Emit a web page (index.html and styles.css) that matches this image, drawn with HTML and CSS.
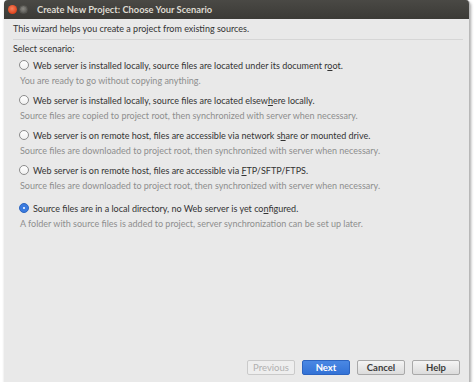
FILE: index.html
```html
<!DOCTYPE html>
<html>
<head>
<meta charset="utf-8">
<link rel="stylesheet" href="styles.css">
</head>
<body>
<div class="window">
  <div class="titlebar">
    <span class="wbtn close"></span>
    <span class="wbtn min"></span>
    <span class="title">Create New Project: Choose Your Scenario</span>
  </div>
  <div class="content">
    <div class="intro">This wizard helps you create a project from existing sources.</div>
    <div class="select">Select scenario:</div>
    <div class="options">
      <div class="opt">
        <div class="label"><span class="radio"></span><span class="text">Web server is installed locally, source files are located under its document r<u>o</u>ot.</span></div>
        <div class="sub">You are ready to go without copying anything.</div>
      </div>
      <div class="opt">
        <div class="label"><span class="radio"></span><span class="text">Web server is installed locally, source files are located elsew<u>h</u>ere locally.</span></div>
        <div class="sub">Source files are copied to project root, then synchronized with server when necessary.</div>
      </div>
      <div class="opt">
        <div class="label"><span class="radio"></span><span class="text">Web server is on remote host, files are accessible via network s<u>h</u>are or mounted drive.</span></div>
        <div class="sub">Source files are downloaded to project root, then synchronized with server when necessary.</div>
      </div>
      <div class="opt">
        <div class="label"><span class="radio"></span><span class="text">Web server is on remote host, files are accessible via <u>F</u>TP/SFTP/FTPS.</span></div>
        <div class="sub">Source files are downloaded to project root, then synchronized with server when necessary.</div>
      </div>
      <div class="opt last">
        <div class="label"><span class="radio checked"></span><span class="text">Source files are in a local directory, no Web server is yet co<u>n</u>figured.</span></div>
        <div class="sub">A folder with source files is added to project, server synchronization can be set up later.</div>
      </div>
    </div>
    <div class="footer">
      <button class="btn disabled">Previous</button>
      <button class="btn primary">Next</button>
      <button class="btn">Cancel</button>
      <button class="btn">Help</button>
    </div>
  </div>
</div>
</body>
</html>
```
FILE: styles.css
```css
* { box-sizing: border-box; }
html, body { margin: 0; padding: 0; background: #ffffff; }
body { font-family: Lato, "Noto Sans", "DejaVu Sans", sans-serif; font-size: 9px; color: #333333; }
.window {
  margin-left: 4px;
  width: 466px;
  height: 382px;
  border-radius: 4px 4px 0 0;
  background: #e9e9e9;
  box-shadow: 1px 2px 3px rgba(0,0,0,0.35);
  border-right: 1px solid #b8b8b8;
  display: flex;
  flex-direction: column;
  overflow: hidden;
}
.titlebar {
  height: 19px;
  flex: none;
  background: linear-gradient(#4a4945, #3b3a36);
  display: flex;
  align-items: center;
  padding-left: 4px;
}
.wbtn { width: 9px; height: 9px; border-radius: 50%; flex: none; }
.close { background: radial-gradient(circle at 45% 40%, #f5825e, #e0431c 70%); margin-right: 2px; }
.min { background: radial-gradient(circle at 45% 40%, #8a8983, #5f5e5a 70%); border: 1px solid #55544f; }
.title { margin-left: 9px; color: #dfdbd2; font-weight: bold; font-size: 9.3px; }
.content { flex: 1; display: flex; flex-direction: column; padding: 0 6px 0 9px; }
.intro { height: 21px; padding-top: 4px; border-bottom: 1px solid #d6d6d6; }
.select { padding-top: 3px; height: 18px; }
.options { padding-left: 6px; }
.opt { height: 35px; }
.opt.last { margin-top: 3px; }
.label { display: flex; align-items: center; height: 14px; }
.radio {
  width: 10px; height: 10px; border-radius: 50%;
  border: 1px solid #8c8c8c; background: linear-gradient(#ffffff, #f0f0f0);
  margin-right: 4px; flex: none; position: relative;
}
.radio.checked { border-color: #2f67c0; background: #3b7be0; }
.radio.checked::after {
  content: ""; position: absolute; left: 3px; top: 3px; width: 2px; height: 2px;
  border-radius: 50%; background: #ffffff;
}
.sub { color: #8e8e8e; padding-left: 1px; margin-top: 3px; }
u { text-decoration: underline; text-underline-offset: 1px; }
.footer { margin-top: auto; display: flex; justify-content: flex-end; gap: 7px; padding: 0 3px 7px 0; }
.btn {
  width: 48px; height: 15px; padding: 0;
  font-family: inherit; font-size: 9.5px; font-weight: bold; color: #3c3c3c;
  border: 1px solid #a9a9a9; border-radius: 2px;
  background: linear-gradient(#f4f4f4, #dcdcdc);
}
.btn.disabled { color: #b0b0b0; border-color: #cacaca; background: #eeeeee; font-weight: normal; }
.btn.primary { color: #ffffff; border-color: #2c64c0; background: linear-gradient(#4a88e4, #3372d6); }
```
